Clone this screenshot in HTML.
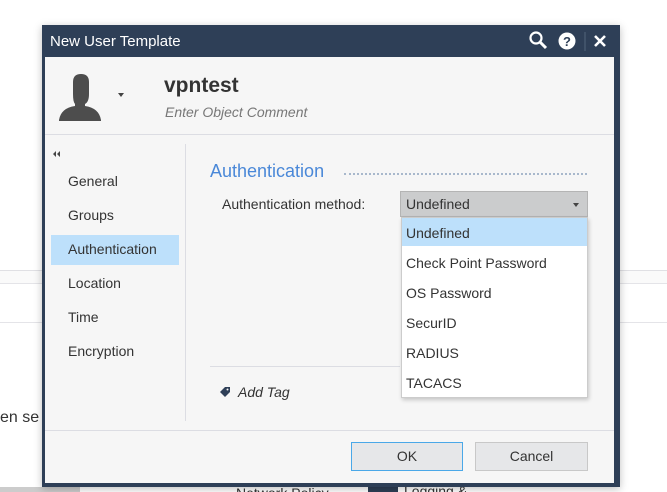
<!DOCTYPE html>
<html><head><style>
*{margin:0;padding:0;box-sizing:border-box}
html,body{width:667px;height:492px;overflow:hidden}
body{background:#fff;font-family:"Liberation Sans",sans-serif;position:relative;color:#333}
.abs{position:absolute}
</style></head><body>
<div class="abs" style="left:0;top:270px;width:667px;height:1px;background:#e0e0e4"></div>
<div class="abs" style="left:0;top:283px;width:667px;height:1px;background:#e4e4e8"></div>
<div class="abs" style="left:0;top:271px;width:667px;height:12px;background:#fafafa"></div>
<div class="abs" style="left:0;top:322px;width:667px;height:1px;background:#e4e4e8"></div>
<div class="abs" style="left:0;top:409px;font-size:16px;color:#333">en se</div>
<div class="abs" style="left:0;top:487px;width:80px;height:5px;background:#ccc"></div>
<div class="abs" style="left:236px;top:485px;font-size:14px;color:#333">Network Policy</div>
<div class="abs" style="left:368px;top:487px;width:30px;height:5px;background:#2e3f57"></div>
<div class="abs" style="left:404px;top:483px;font-size:14px;color:#333">Logging &amp;</div>
<div class="abs" style="left:42px;top:25px;width:578px;height:462px;background:#2e3f57;box-shadow:0 2px 8px rgba(0,0,0,.25)"></div>
<div class="abs" style="left:50px;top:33px;font-size:15px;color:#fff">New User Template</div>
<svg class="abs" style="left:528px;top:30px" width="80" height="22" viewBox="0 0 80 22">
<circle cx="8" cy="8" r="5.5" fill="none" stroke="#fff" stroke-width="2.2"/>
<line x1="12" y1="12" x2="18" y2="18" stroke="#fff" stroke-width="3"/>
<circle cx="39" cy="11" r="8.5" fill="#fff"/>
<text x="39" y="16" font-size="13" font-weight="bold" text-anchor="middle" fill="#2e3f57" font-family="Liberation Sans">?</text>
<line x1="57" y1="2" x2="57" y2="21" stroke="#53647b" stroke-width="1"/>
<path d="M70 6 L80 16 M80 6 L70 16" stroke="#fff" stroke-width="2.6" transform="translate(-3,0)"/>
</svg>
<div class="abs" style="left:45px;top:57px;width:569px;height:426px;background:#f6f6f6"></div>
<svg class="abs" style="left:59px;top:74px" width="44" height="48" viewBox="0 0 44 48">
<path d="M14 8 Q14 0 22 0 Q30 0 30 8 L30 20 Q30 28 26 30 L26 32 Q40 34 42 46 L42 47 L0 47 L0 46 Q2 34 16 32 L16 30 Q14 28 14 20 Z" fill="#4d4d4d"/>
</svg>
<div class="abs" style="left:118px;top:93px;width:0;height:0;border-left:3px solid transparent;border-right:3px solid transparent;border-top:4px solid #444"></div>
<div class="abs" style="left:164px;top:74px;font-size:21px;font-weight:bold;color:#333">vpntest</div>
<div class="abs" style="left:165px;top:104px;font-size:14px;font-style:italic;color:#777">Enter Object Comment</div>
<div class="abs" style="left:45px;top:134px;width:569px;height:1px;background:#dcdde3"></div>
<svg class="abs" style="left:53px;top:151px" width="10" height="6" viewBox="0 0 10 6"><path d="M0 3 L3 0 L3 6 Z M4 3 L7 0 L7 6 Z" fill="#444"/></svg>
<div class="abs" style="left:185px;top:144px;width:1px;height:277px;background:#dcdde3"></div>
<div class="abs" style="left:51px;top:235px;width:128px;height:30px;background:#bde0fb"></div>
<div class="abs" style="left:68px;top:172px;font-size:14px;line-height:18px">General</div>
<div class="abs" style="left:68px;top:206px;font-size:14px;line-height:18px">Groups</div>
<div class="abs" style="left:68px;top:240px;font-size:14px;line-height:18px">Authentication</div>
<div class="abs" style="left:68px;top:274px;font-size:14px;line-height:18px">Location</div>
<div class="abs" style="left:68px;top:308px;font-size:14px;line-height:18px">Time</div>
<div class="abs" style="left:68px;top:342px;font-size:14px;line-height:18px">Encryption</div>
<div class="abs" style="left:210px;top:161px;font-size:18px;color:#4a88d8">Authentication</div>
<div class="abs" style="left:344px;top:173px;width:243px;border-top:2px dotted #a8b8cc"></div>
<div class="abs" style="left:222px;top:196px;font-size:14px;color:#333">Authentication method:</div>
<div class="abs" style="left:400px;top:191px;width:188px;height:26px;background:#cbcccd;border:1px solid #b4b4b4"></div>
<div class="abs" style="left:406px;top:196px;font-size:14px;color:#333">Undefined</div>
<div class="abs" style="left:573px;top:203px;width:0;height:0;border-left:3px solid transparent;border-right:3px solid transparent;border-top:4px solid #444"></div>
<div class="abs" style="left:210px;top:366px;width:190px;height:1px;background:#dcdde3"></div>
<svg class="abs" style="left:219px;top:386px" width="12" height="12" viewBox="0 0 12 12"><path d="M1 6 L6 1 L11 1 L11 6 L6 11 Z" fill="#2e3f57"/><circle cx="8.5" cy="3.5" r="1" fill="#f6f6f6"/></svg>
<div class="abs" style="left:238px;top:384px;font-size:14px;font-style:italic;color:#333">Add Tag</div>
<div class="abs" style="left:401px;top:217px;width:187px;height:181px;background:#fff;border:1px solid #ccc;box-shadow:1px 2px 4px rgba(0,0,0,.2)"></div>
<div class="abs" style="left:402px;top:218px;width:185px;height:28px;background:#bde0fb"></div>
<div class="abs" style="left:406px;top:224px;font-size:14px;line-height:18px">Undefined</div>
<div class="abs" style="left:406px;top:254px;font-size:14px;line-height:18px">Check Point Password</div>
<div class="abs" style="left:406px;top:284px;font-size:14px;line-height:18px">OS Password</div>
<div class="abs" style="left:406px;top:314px;font-size:14px;line-height:18px">SecurID</div>
<div class="abs" style="left:406px;top:344px;font-size:14px;line-height:18px">RADIUS</div>
<div class="abs" style="left:406px;top:374px;font-size:14px;line-height:18px">TACACS</div>
<div class="abs" style="left:45px;top:430px;width:569px;height:1px;background:#dcdde3"></div>
<div class="abs" style="left:351px;top:442px;width:112px;height:29px;background:#e6e7e9;border:1px solid #4aa8e8;font-size:14px;text-align:center;line-height:27px">OK</div>
<div class="abs" style="left:475px;top:442px;width:113px;height:29px;background:#e6e7e9;border:1px solid #c8c8c8;font-size:14px;text-align:center;line-height:27px">Cancel</div>
</body></html>
